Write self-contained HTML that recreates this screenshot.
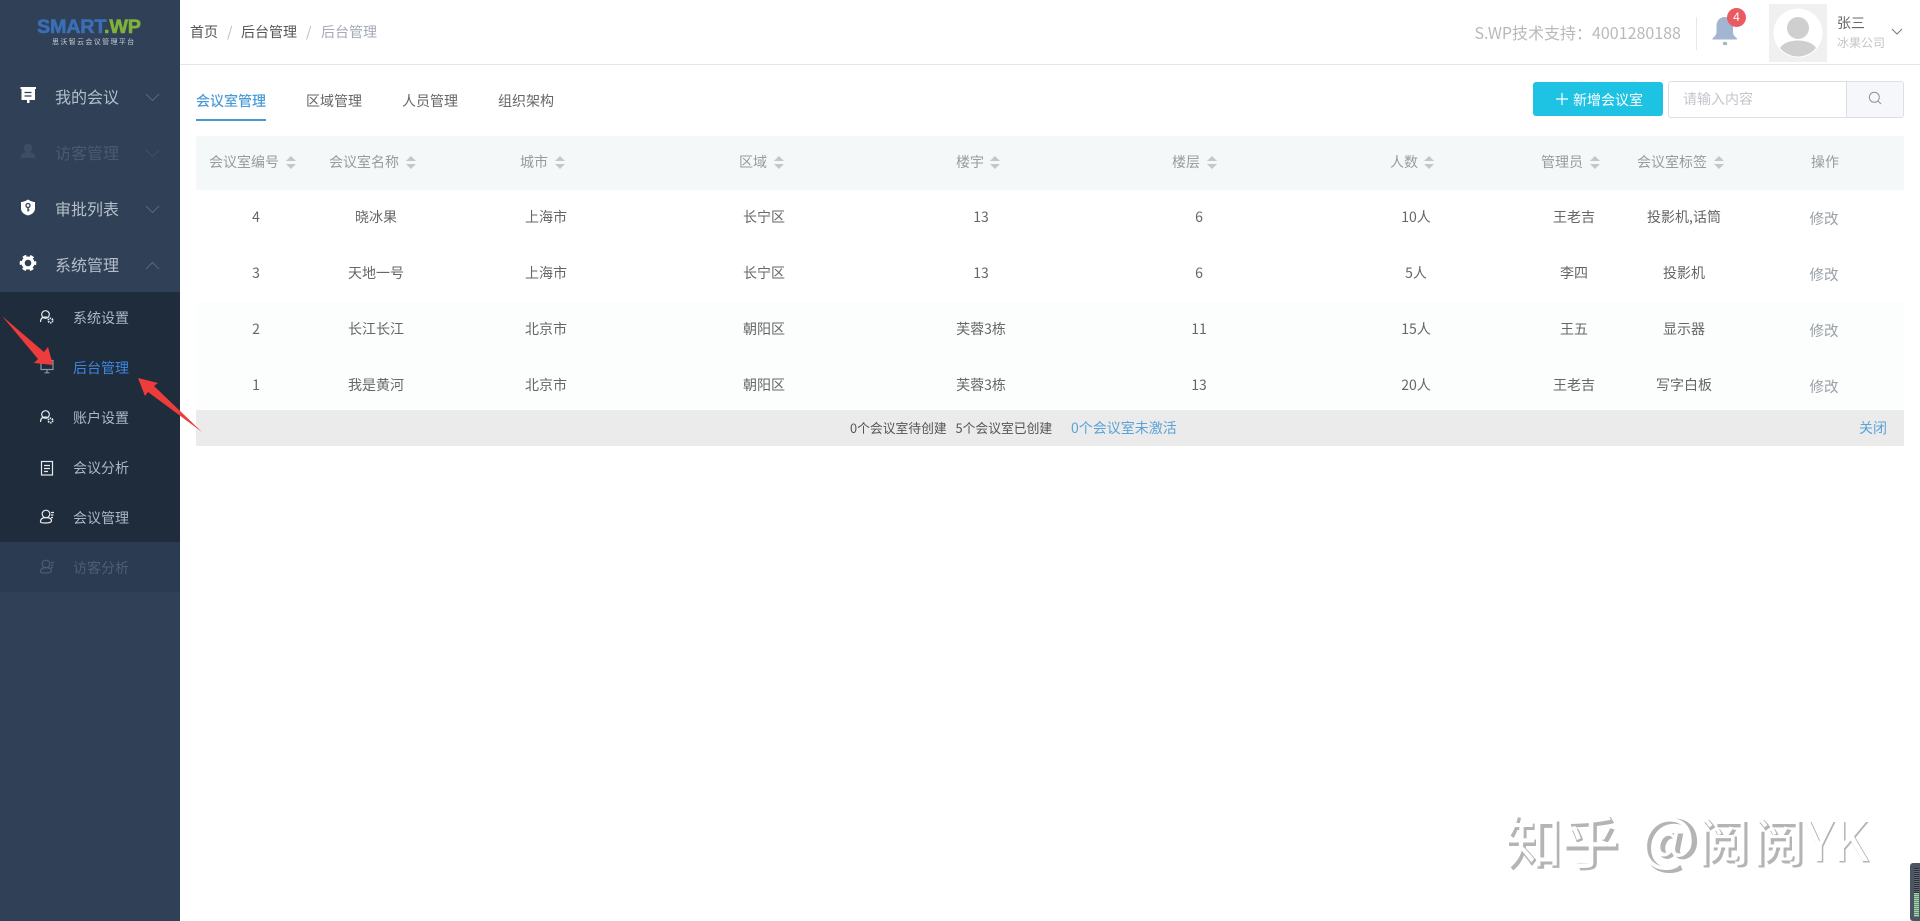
<!DOCTYPE html>
<html lang="zh-CN"><head><meta charset="utf-8"><title>会议室管理</title>
<style>
html,body{margin:0;padding:0;width:1920px;height:921px;overflow:hidden;background:#fff}
body{font-family:"Noto Sans CJK SC","Liberation Sans",sans-serif;position:relative;font-size:14px;color:#666}
.a{position:absolute;white-space:nowrap;line-height:20px}
.c{position:absolute;white-space:nowrap;line-height:20px;transform:translateX(-50%)}
.box{position:absolute}
svg{position:absolute;overflow:visible}
.m{font-size:16px;color:#b4bfca;left:55px;line-height:24px}
.s{color:#a9b8c6;left:73px}
.th{color:#9a9a9a;top:152px}
.td{color:#666}
.op{color:#9aa0a8;font-size:14.500px}
.sort{position:absolute;top:156px;width:10px;height:13px}
.sort:before,.sort:after{content:"";position:absolute;left:0;border-left:5px solid transparent;border-right:5px solid transparent}
.sort:before{top:0;border-bottom:5px solid #c4c8cc}
.sort:after{bottom:0;border-top:5px solid #c4c8cc}
.wg{position:absolute;white-space:nowrap;line-height:70px;color:#b4b4b4;font-weight:700}
.wt{position:absolute;white-space:nowrap;line-height:70px;color:#fff;font-weight:400}
</style></head><body>

<!-- sidebar -->
<div class="box" style="left:0;top:0;width:180px;height:921px;background:#2f4057"></div>
<div class="box" style="left:0;top:292px;width:180px;height:250px;background:#1f2c3b"></div>
<div class="box" style="left:0;top:542px;width:180px;height:50px;background:#2b3b51"></div>

<!-- logo -->
<div class="a" style="left:37px;top:18px;font-family:'Liberation Sans',sans-serif;font-weight:700;font-size:19px;letter-spacing:-.2px;line-height:20px;transform:scaleX(1.040);transform-origin:0 0;-webkit-text-stroke:.6px currentColor;color:#3a6fb5">SMART<span style="color:#7fb23a">.WP</span></div>
<div class="a" style="left:52px;top:37px;font-size:7px;line-height:10px;letter-spacing:1.350px;color:#c5ced8">思沃智云会议管理平台</div>

<!-- main menu -->
<svg style="left:0;top:0" width="180" height="300" viewBox="0 0 180 300">
  <!-- board -->
  <path d="M20.500 87h15.500v2h-1v11h-5.500v3h-2.500v-3H21.500V89h-1z" fill="#fff"/>
  <path d="M24.500 92.500h7M24.500 96h7" stroke="#2f4057" stroke-width="1.300"/>
  <!-- visitor -->
  <circle cx="28" cy="148" r="4.500" fill="#3c4c61"/><path d="M20.500 158c0-5 4-6 7.500-6s7.500 1 7.500 6z" fill="#3c4c61"/>
  <!-- shield -->
  <path d="M28 199.500c2.500 1.800 5 2.500 7 2.500v6.500c0 3.500-3 6-7 7-4-1-7-3.500-7-7V202c2 0 4.500-.7 7-2.500z" fill="#fff"/>
  <circle cx="28" cy="205.500" r="2" fill="none" stroke="#2f4057" stroke-width="1.300"/><path d="M28 207.500v4M28 210h1.500" stroke="#2f4057" stroke-width="1.300"/>
  <!-- gear -->
  <circle cx="28" cy="263" r="6.500" fill="#fff"/>
  <circle cx="28" cy="263" r="7" fill="none" stroke="#fff" stroke-width="2.600" stroke-dasharray="3.700 3.630" stroke-dashoffset="1.850"/>
  <circle cx="28" cy="263" r="3.300" fill="#2f4057"/>
  <!-- chevrons -->
  <g fill="none" stroke="#55677c" stroke-width="1.100">
    <path d="M146 94l6.500 6.500L159 94"/>
    <path d="M146 150l6.500 6.500L159 150" stroke="#3f4f64"/>
    <path d="M146 206l6.500 6.500L159 206"/>
    <path d="M146 269l6.500-6.500L159 269"/>
  </g>
</svg>
<div class="a m" style="top:84px">我的会议</div>
<div class="a m" style="top:140px;color:#4a5b70">访客管理</div>
<div class="a m" style="top:196px">审批列表</div>
<div class="a m" style="top:252px">系统管理</div>

<!-- sub menu -->
<svg style="left:0;top:290px" width="180" height="310" viewBox="0 290 180 310">
  <g fill="none" stroke="#e6ebef" stroke-width="1.200">
    <circle cx="45.500" cy="314.500" r="3.800"/><path d="M40.500 322c0-3.500 2-5 5-5 1 0 2 .2 2.800.7"/><circle cx="50.500" cy="320.500" r="2.200" stroke-width="1.700" stroke-dasharray="1.500 .8"/>
    <circle cx="45.500" cy="414.500" r="3.800"/><path d="M40.500 422c0-3.500 2-5 5-5 1 0 2 .2 2.800.7"/><circle cx="50.500" cy="420.500" r="2.200" stroke-width="1.700" stroke-dasharray="1.500 .8"/>
    <rect x="41.500" y="461.500" width="11" height="13.500"/><path d="M44 465.500h6M44 468.500h6M44 471.500h4"/>
    <circle cx="46" cy="514" r="3.800"/><path d="M40.500 522c0-3 2-4.500 5.500-4.500s5.500 1.500 5.500 3-2 2.500-5.500 2.500-5.500-.3-5.500-1zM51 512.500h3M51 515h2.500M51 517.500h2"/>
    <rect x="41" y="360.500" width="12" height="9" stroke="#8b97a3"/><path d="M47 370v2.500M44.500 372.800h5" stroke="#8b97a3"/>
  </g>
  <g fill="none" stroke="#4c5e74" stroke-width="1.200">
    <circle cx="46" cy="564" r="3.800"/><path d="M40.500 572c0-3 2-4.500 5.500-4.500s5.500 1.500 5.500 3-2 2.500-5.500 2.500-5.500-.3-5.500-1zM51 562.500h3M51 565h2.500M51 567.500h2"/>
  </g>
</svg>
<div class="a s" style="top:308px">系统设置</div>
<div class="a s" style="top:358px;color:#3f86e0">后台管理</div>
<div class="a s" style="top:408px">账户设置</div>
<div class="a s" style="top:458px">会议分析</div>
<div class="a s" style="top:508px">会议管理</div>
<div class="a s" style="top:558px;color:#4d5e73">访客分析</div>

<!-- header -->
<div class="box" style="left:180px;top:64px;width:1740px;height:1px;background:#e3e5e7"></div>
<div class="a" style="left:190px;top:22px;color:#555">首页</div>
<div class="a" style="left:227px;top:22px;color:#b5bac2">/</div>
<div class="a" style="left:241px;top:22px;color:#555">后台管理</div>
<div class="a" style="left:306px;top:22px;color:#b5bac2">/</div>
<div class="a" style="left:321px;top:22px;color:#a3a9b5">后台管理</div>

<div class="a" style="left:1474.500px;top:22px;font-size:16px;color:#b9b9b9">S.WP技术支持：4001280188</div>
<div class="box" style="left:1696px;top:17px;width:1px;height:33px;background:#e8e8e8"></div>
<svg style="left:1711px;top:16px" width="28" height="30" viewBox="0 0 28 30">
  <path d="M14 1c5.500 0 8 4 8 9v6c0 3 2 4.500 4 6.500v1H1.500v-1c2-2 4-3.500 4-6.500v-6c0-5 3-9 8.500-9z" fill="#a3b5d0"/>
  <ellipse cx="14" cy="27.500" rx="2.300" ry="1.800" fill="#a3b5d0"/>
</svg>
<div class="box" style="left:1727px;top:8px;width:19px;height:19px;border-radius:50%;background:#e95b60;color:#fff;font-size:12px;line-height:19px;text-align:center;font-family:'Liberation Sans',sans-serif">4</div>
<div class="box" style="left:1769px;top:4px;width:58px;height:58px;background:#f0f0f0"></div>
<svg style="left:1769px;top:4px" width="58" height="58" viewBox="0 0 58 58">
  <circle cx="29" cy="29" r="24.500" fill="#fff"/>
  <circle cx="29" cy="24" r="11" fill="#cfcfcf"/>
  <path d="M11 44c3-5 10-7.500 18-7.500s15 2.500 18 7.500c-4 5-11 8.500-18 8.500S15 49 11 44z" fill="#cfcfcf"/>
</svg>
<div class="a" style="left:1837px;top:13px;color:#666">张三</div>
<div class="a" style="left:1837px;top:33px;font-size:12px;color:#c4c4c4">冰果公司</div>
<svg style="left:1891px;top:28px" width="12" height="8" viewBox="0 0 12 8"><path d="M1 1l5 5 5-5" fill="none" stroke="#777" stroke-width="1"/></svg>

<!-- tabs -->
<div class="a" style="left:196px;top:91px;color:#4a9bd8;font-weight:500">会议室管理</div>
<div class="box" style="left:196px;top:119px;width:70px;height:2px;background:#4a98cf"></div>
<div class="a" style="left:306px;top:91px;color:#666">区域管理</div>
<div class="a" style="left:402px;top:91px;color:#666">人员管理</div>
<div class="a" style="left:498px;top:91px;color:#666">组织架构</div>

<div class="box" style="left:1533px;top:82px;width:130px;height:34px;background:#1ec3e4;border-radius:3px"></div>
<svg style="left:1555px;top:92px" width="14" height="14" viewBox="0 0 14 14"><path d="M7 1v12M1 7h12" stroke="#fff" stroke-width="1.200"/></svg>
<div class="a" style="left:1573px;top:90px;color:#fff">新增会议室</div>
<div class="box" style="left:1668px;top:81px;width:234px;height:35px;border:1px solid #dcdfe6;border-radius:3px;background:#fff"></div>
<div class="box" style="left:1846px;top:82px;width:56px;height:35px;background:#f5f7fa;border-left:1px solid #dcdfe6;border-radius:0 3px 3px 0"></div>
<div class="a" style="left:1683px;top:89px;color:#c2c5cb">请输入内容</div>
<svg style="left:1868px;top:91px" width="14" height="14" viewBox="0 0 14 14"><circle cx="6.300" cy="6.300" r="5" fill="none" stroke="#909399" stroke-width="1"/><path d="M10 10l3 3" stroke="#909399" stroke-width="1"/></svg>

<!-- table -->
<div class="box" style="left:196px;top:136px;width:1708px;height:54px;background:#f5f8f9"></div>
<div class="box" style="left:196px;top:302px;width:1708px;height:108px;background:#fcfdfd"></div>
<div class="box" style="left:196px;top:410px;width:1708px;height:36px;background:#ebebeb"></div>

<div class="a th" style="left:209px">会议室编号</div><i class="sort" style="left:286px"></i>
<div class="a th" style="left:329px">会议室名称</div><i class="sort" style="left:406px"></i>
<div class="a th" style="left:520px">城市</div><i class="sort" style="left:555px"></i>
<div class="a th" style="left:739px">区域</div><i class="sort" style="left:774px"></i>
<div class="a th" style="left:956px">楼宇</div><i class="sort" style="left:990px"></i>
<div class="a th" style="left:1172px">楼层</div><i class="sort" style="left:1207px"></i>
<div class="a th" style="left:1390px">人数</div><i class="sort" style="left:1424px"></i>
<div class="a th" style="left:1541px">管理员</div><i class="sort" style="left:1590px"></i>
<div class="a th" style="left:1637px">会议室标签</div><i class="sort" style="left:1714px"></i>
<div class="a th" style="left:1811px">操作</div>

<div class="c td" style="left:256px;top:207px">4</div><div class="c td" style="left:376px;top:207px">晓冰果</div><div class="c td" style="left:546px;top:207px">上海市</div><div class="c td" style="left:764px;top:207px">长宁区</div><div class="c td" style="left:981px;top:207px">13</div><div class="c td" style="left:1199px;top:207px">6</div><div class="c td" style="left:1416px;top:207px">10人</div><div class="c td" style="left:1574px;top:207px">王老吉</div><div class="c td" style="left:1684px;top:207px">投影机,话筒</div><div class="c op" style="left:1824px;top:209px">修改</div>

<div class="c td" style="left:256px;top:263px">3</div><div class="c td" style="left:376px;top:263px">天地一号</div><div class="c td" style="left:546px;top:263px">上海市</div><div class="c td" style="left:764px;top:263px">长宁区</div><div class="c td" style="left:981px;top:263px">13</div><div class="c td" style="left:1199px;top:263px">6</div><div class="c td" style="left:1416px;top:263px">5人</div><div class="c td" style="left:1574px;top:263px">李四</div><div class="c td" style="left:1684px;top:263px">投影机</div><div class="c op" style="left:1824px;top:265px">修改</div>

<div class="c td" style="left:256px;top:319px">2</div><div class="c td" style="left:376px;top:319px">长江长江</div><div class="c td" style="left:546px;top:319px">北京市</div><div class="c td" style="left:764px;top:319px">朝阳区</div><div class="c td" style="left:981px;top:319px">芙蓉3栋</div><div class="c td" style="left:1199px;top:319px">11</div><div class="c td" style="left:1416px;top:319px">15人</div><div class="c td" style="left:1574px;top:319px">王五</div><div class="c td" style="left:1684px;top:319px">显示器</div><div class="c op" style="left:1824px;top:321px">修改</div>

<div class="c td" style="left:256px;top:375px">1</div><div class="c td" style="left:376px;top:375px">我是黄河</div><div class="c td" style="left:546px;top:375px">北京市</div><div class="c td" style="left:764px;top:375px">朝阳区</div><div class="c td" style="left:981px;top:375px">芙蓉3栋</div><div class="c td" style="left:1199px;top:375px">13</div><div class="c td" style="left:1416px;top:375px">20人</div><div class="c td" style="left:1574px;top:375px">王老吉</div><div class="c td" style="left:1684px;top:375px">写字白板</div><div class="c op" style="left:1824px;top:377px">修改</div>

<div class="a" style="left:850px;top:418px;font-size:12.800px;color:#555">0个会议室待创建</div>
<div class="a" style="left:955.500px;top:418px;font-size:12.800px;color:#555">5个会议室已创建</div>
<div class="a" style="left:1071px;top:418px;color:#5ba3d6">0个会议室未激活</div>
<div class="a" style="left:1859px;top:418px;color:#5ba3d6">关闭</div>

<!-- red arrows -->
<svg style="left:0;top:0" width="300" height="500" viewBox="0 0 300 500">
  <path d="M2 316L44 352L48 347L53 365L34 363L38 359z" fill="#ee3b3b"/>
  <path d="M202 432L148 392L145 396L138 378L158 383L154 386z" fill="#ee3b3b"/>
</svg>

<!-- watermark -->
<div class="wg" style="left:1507px;top:806px;font-size:57px">知乎</div>
<div class="wt" style="left:1505px;top:804px;font-size:57px">知乎</div>
<div class="wg" style="left:1642px;top:802px;font-size:58px">@</div>
<div class="wt" style="left:1640px;top:800px;font-size:58px">@</div>
<div class="wg" style="left:1700px;top:806px;font-size:51px;letter-spacing:4px">阅阅</div>
<div class="wt" style="left:1698px;top:804px;font-size:51px;letter-spacing:4px">阅阅</div>
<div class="wg" style="left:1806px;top:804px;font-size:54px;font-weight:400;-webkit-text-stroke:1px #b4b4b4">YK</div>
<div class="wt" style="left:1805px;top:803px;font-size:54px;font-weight:400">YK</div>

<!-- bottom right meter -->
<div class="box" style="left:1910px;top:863px;width:10px;height:58px;background:#4c5663;border-radius:3px 0 0 3px"></div>
<div class="box" style="left:1914px;top:868px;width:5px;height:25px;background:repeating-linear-gradient(#2a3038 0 1px,#667 1px 2px)"></div>
<div class="box" style="left:1914px;top:893px;width:5px;height:24px;background:repeating-linear-gradient(#a9d6a0 0 1px,#5f8f86 1px 2px)"></div>

</body></html>
